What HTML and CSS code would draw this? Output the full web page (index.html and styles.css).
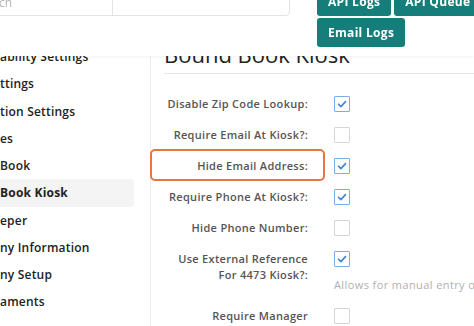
FILE: index.html
```html
<!DOCTYPE html>
<html lang="en">
<head>
    <meta charset="UTF-8">
    <meta name="viewport" content="width=device-width, initial-scale=1.0">
    <title>Bound Book Kiosk</title>
    <link rel="stylesheet" href="styles.css">
</head>
<body>
    <header class="topbar">
        <div class="search-group">
            <div class="search-field">Search</div>
            <div class="search-field search-wide"></div>
        </div>
        <div class="log-actions">
            <button class="btn">API Logs</button>
            <button class="btn">API Queue</button>
            <button class="btn">Email Logs</button>
        </div>
    </header>

    <div class="layout">
        <!-- Settings menu (scrolled, left edge cut off) -->
        <nav class="sidebar">
            <div class="nav-item">ability Settings</div>
            <div class="nav-item">ttings</div>
            <div class="nav-item">tion Settings</div>
            <div class="nav-item">es</div>
            <div class="nav-item">Book</div>
            <div class="nav-item active">Book Kiosk</div>
            <div class="nav-item">eper</div>
            <div class="nav-item">ny Information</div>
            <div class="nav-item">ny Setup</div>
            <div class="nav-item">aments</div>
        </nav>

        <main class="content">
            <h1 class="page-title">Bound Book Kiosk</h1>

            <div class="form-grid">
                <div class="form-label">Disable Zip Code Lookup:</div>
                <div class="form-control"><span class="check checked"><svg viewBox="0 0 14 14"><path d="M3.5 7.2l2.4 2.4 4.6-5"/></svg></span></div>

                <div class="form-label">Require Email At Kiosk?:</div>
                <div class="form-control"><span class="check"></span></div>

                <div class="form-label highlight">Hide Email Address:</div>
                <div class="form-control"><span class="check checked"><svg viewBox="0 0 14 14"><path d="M3.5 7.2l2.4 2.4 4.6-5"/></svg></span></div>

                <div class="form-label">Require Phone At Kiosk?:</div>
                <div class="form-control"><span class="check checked"><svg viewBox="0 0 14 14"><path d="M3.5 7.2l2.4 2.4 4.6-5"/></svg></span></div>

                <div class="form-label">Hide Phone Number:</div>
                <div class="form-control"><span class="check"></span></div>

                <div class="form-label">Use External Reference<br>For 4473 Kiosk?:</div>
                <div class="form-control">
                    <span class="check checked"><svg viewBox="0 0 14 14"><path d="M3.5 7.2l2.4 2.4 4.6-5"/></svg></span>
                    <div class="help-text">Allows for manual entry of the external reference</div>
                </div>

                <div class="form-label">Require Manager</div>
                <div class="form-control"><span class="check"></span></div>
            </div>
        </main>
    </div>
</body>
</html>
```

FILE: styles.css
```css
body {
    margin: 0;
    font-family: "Open Sans", Arial, sans-serif;
    background: #fff;
    color: #222;
    overflow: hidden;
}
.topbar {
    position: fixed;
    top: 0;
    left: 0;
    right: 0;
    height: 56px;
    background: #fff;
    box-shadow: 0 1px 3px rgba(0,0,0,0.06);
    display: flex;
    align-items: flex-start;
    gap: 27px;
    z-index: 10;
}
.search-group {
    display: flex;
    width: 330px;
    height: 33px;
    margin-top: -17px;
    margin-left: -40px;
    border: 1px solid #e3e3e3;
    border-radius: 4px;
    box-sizing: border-box;
    flex-shrink: 0;
}
.search-field {
    width: 152px;
    padding: 10px 0 0 13px;
    box-sizing: border-box;
    font-size: 12px;
    color: #b5b5b5;
    border-right: 1px solid #e3e3e3;
}
.search-wide {
    flex: 1;
    border-right: none;
}
.log-actions {
    display: flex;
    flex-wrap: wrap;
    gap: 2px 3px;
    width: 200px;
    margin-top: -13px;
    flex-shrink: 0;
}
.btn {
    height: 29px;
    padding: 0 11px;
    background: #167e7a;
    color: #fff;
    border: none;
    border-radius: 3px;
    font-family: inherit;
    font-size: 12px;
    font-weight: 700;
    letter-spacing: 0.3px;
    white-space: nowrap;
}
.layout {
    display: flex;
    margin-top: 40px;
}
.sidebar {
    width: 151px;
    padding: 3px 16px 0 0;
    box-sizing: border-box;
    border-right: 1px solid #ececec;
    flex-shrink: 0;
    min-height: 300px;
}
.nav-item {
    height: 27.25px;
    line-height: 27.25px;
    font-size: 12px;
    font-weight: 600;
    letter-spacing: 0.2px;
    color: #222;
    white-space: nowrap;
}
.nav-item.active {
    background: #f4f4f5;
    border-radius: 0 3px 3px 0;
    font-weight: 700;
}
.content {
    flex: 1;
    padding-left: 13px;
}
.page-title {
    margin: 0;
    font-size: 22px;
    line-height: 28px;
    font-weight: 400;
    letter-spacing: 0;
    padding-bottom: 5px;
    border-bottom: 1px solid #e6e6e6;
    white-space: nowrap;
}
.form-grid {
    display: grid;
    grid-template-columns: 144px 1fr;
    column-gap: 26px;
    margin-top: 14px;
}
.form-label {
    position: relative;
    padding: 7.5px 0;
    text-align: right;
    font-size: 11px;
    line-height: 16px;
    font-weight: 600;
    letter-spacing: 0.3px;
    color: #555;
    white-space: nowrap;
}
.form-label.highlight::after {
    content: "";
    position: absolute;
    left: -14px;
    right: -17px;
    top: -1px;
    bottom: 0;
    border: 2px solid #e87540;
    border-radius: 5px;
}
.form-control {
    padding: 8px 0 7px;
    white-space: nowrap;
}
.check {
    display: block;
    width: 14px;
    height: 14px;
    border: 1px solid #d6d6d6;
    border-radius: 1px;
    background: #fff;
}
.check.checked {
    border-color: #7aaee8;
}
.check svg {
    display: block;
    width: 14px;
    height: 14px;
    fill: none;
    stroke: #3d86d8;
    stroke-width: 1.6;
    stroke-linecap: round;
    stroke-linejoin: round;
}
.help-text {
    margin-top: 10px;
    font-size: 11px;
    line-height: 16px;
    letter-spacing: 0.4px;
    color: #b0b0b0;
}
```
